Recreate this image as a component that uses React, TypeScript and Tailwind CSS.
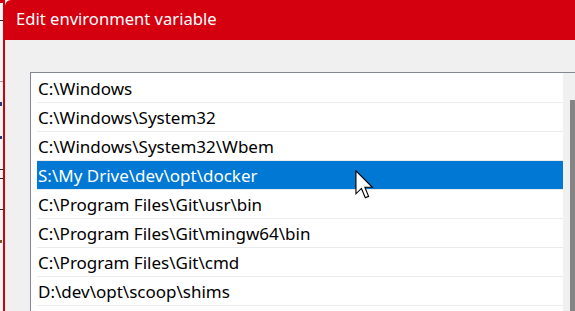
const PATHS = [
  "C:\\Windows",
  "C:\\Windows\\System32",
  "C:\\Windows\\System32\\Wbem",
  "S:\\My Drive\\dev\\opt\\docker",
  "C:\\Program Files\\Git\\usr\\bin",
  "C:\\Program Files\\Git\\mingw64\\bin",
  "C:\\Program Files\\Git\\cmd",
  "D:\\dev\\opt\\scoop\\shims",
  "",
];

const SELECTED = 3;

function Cursor() {
  return (
    <svg
      className="absolute left-[355px] top-[170px]"
      width="19"
      height="29"
      viewBox="0 0 12.5 19.5"
    >
      <path
        d="M0.5 0.5 L0.5 16 L4.2 12.4 L6.8 18.6 L9 17.7 L6.5 11.6 L11.5 11.6 Z"
        fill="#ffffff"
        stroke="#000000"
        strokeWidth="0.75"
        strokeLinejoin="miter"
      />
    </svg>
  );
}

export default function App() {
  return (
    <div className="relative flex h-[311px] w-[575px] overflow-hidden bg-[#f0f0f0] font-['Noto_Sans',sans-serif]">
      {/* window behind */}
      <div className="flex w-[3px] shrink-0 flex-col bg-[#f6f6f6]">
        <div className="h-[3px] bg-[#d4000f]" />
        <div className="mt-[17px] h-px bg-[#2b2b2b]" />
        <div className="mt-[60px] h-px bg-[#9a9a9a]" />
        <div className="mt-[20px] h-[4px] w-[2px] bg-[#1e3c78]" />
        <div className="mt-[30px] h-[3px] w-[2px] bg-[#1e3c78]" />
        <div className="mt-[30px] h-px bg-[#2b2b2b]" />
        <div className="mt-[8px] h-px bg-[#2b2b2b]" />
        <div className="mt-[30px] h-px bg-[#2b2b2b]" />
        <div className="mt-[30px] h-[3px] w-[2px] bg-[#7a5a2a]" />
      </div>

      {/* dialog */}
      <div className="flex min-h-0 flex-1 flex-col border-l-2 border-[#d4000f]">
        <div className="flex h-[40px] shrink-0 items-center rounded-tl-[6px] bg-[#d4000f] pl-[11px] pb-[1px]">
          <span className="text-[16.6px] text-white">Edit environment variable</span>
        </div>

        <div className="min-h-0 flex-1 overflow-hidden pl-[25px] pt-[32px]">
          <div className="flex h-full border-l border-t border-[#828790] bg-white">
            <div className="flex-1 pl-[6px] pt-px">
              {PATHS.map((p, i) => (
                <div
                  key={i}
                  className={`flex h-[29px] items-center border-b border-[#ebebeb] pl-[1px] pt-[2px] text-[17px] ${
                    i === SELECTED ? "bg-[#0078d4] text-white" : "text-black"
                  }`}
                >
                  {p}
                </div>
              ))}
            </div>
            <div className="w-[12px] shrink-0 bg-[#f0f0f0] pl-[7px] pt-[27px]">
              <div className="h-full bg-[#858585]" />
            </div>
          </div>
        </div>
      </div>

      <Cursor />
    </div>
  );
}
